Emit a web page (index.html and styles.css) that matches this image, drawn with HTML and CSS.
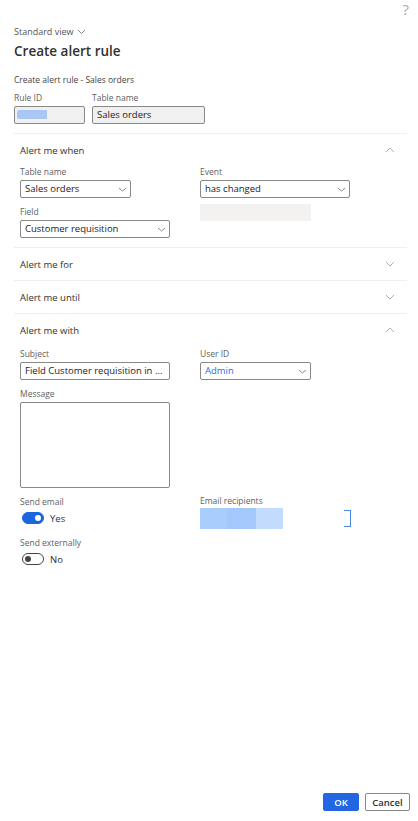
FILE: index.html
```html
<!DOCTYPE html>
<html lang="en">
<head>
    <meta charset="UTF-8">
    <meta name="viewport" content="width=device-width, initial-scale=1.0">
    <title>Create alert rule</title>
    <link rel="stylesheet" href="styles.css">
</head>
<body>
    <div class="dialog">
        <div class="help-bar"><span class="help">?</span></div>

        <div class="view-switch">Standard view
            <svg class="chev-sm" width="9" height="6" viewBox="0 0 9 6"><polyline points="1,1 4.5,4.5 8,1" /></svg>
        </div>
        <h1 class="title">Create alert rule</h1>
        <div class="caption">Create alert rule - Sales orders</div>

        <div class="head-fields">
            <div class="field">
                <label>Rule ID</label>
                <div class="input readonly w-rule"><span class="masked"></span></div>
            </div>
            <div class="field">
                <label>Table name</label>
                <div class="input readonly w-table">Sales orders</div>
            </div>
        </div>

        <!-- Alert me when -->
        <section class="fasttab">
            <div class="fasttab-header">
                <span>Alert me when</span>
                <svg class="chev" width="10" height="6" viewBox="0 0 10 6"><polyline points="1,5 5,1 9,5" /></svg>
            </div>
            <div class="fasttab-body grid-2">
                <div class="col">
                    <div class="field">
                        <label>Table name</label>
                        <div class="input select w-111">Sales orders
                            <svg class="chev-sel" width="9" height="5" viewBox="0 0 9 5"><polyline points="1,1 4.5,4 8,1" /></svg>
                        </div>
                    </div>
                    <div class="field">
                        <label>Field</label>
                        <div class="input select w-150">Customer requisition
                            <svg class="chev-sel" width="9" height="5" viewBox="0 0 9 5"><polyline points="1,1 4.5,4 8,1" /></svg>
                        </div>
                    </div>
                </div>
                <div class="col">
                    <div class="field">
                        <label>Event</label>
                        <div class="input select w-150">has changed
                            <svg class="chev-sel" width="9" height="5" viewBox="0 0 9 5"><polyline points="1,1 4.5,4 8,1" /></svg>
                        </div>
                    </div>
                    <div class="blank-box"></div>
                </div>
            </div>
        </section>

        <section class="fasttab">
            <div class="fasttab-header">
                <span>Alert me for</span>
                <svg class="chev" width="10" height="6" viewBox="0 0 10 6"><polyline points="1,1 5,5 9,1" /></svg>
            </div>
        </section>

        <section class="fasttab">
            <div class="fasttab-header">
                <span>Alert me until</span>
                <svg class="chev" width="10" height="6" viewBox="0 0 10 6"><polyline points="1,1 5,5 9,1" /></svg>
            </div>
        </section>

        <!-- Alert me with -->
        <section class="fasttab">
            <div class="fasttab-header">
                <span>Alert me with</span>
                <svg class="chev" width="10" height="6" viewBox="0 0 10 6"><polyline points="1,5 5,1 9,5" /></svg>
            </div>
            <div class="fasttab-body body-with grid-2">
                <div class="col">
                    <div class="field">
                        <label>Subject</label>
                        <div class="input w-150">Field Customer requisition in ...</div>
                    </div>
                    <div class="field">
                        <label>Message</label>
                        <div class="input textarea w-150"></div>
                    </div>
                    <div class="field">
                        <label>Send email</label>
                        <div class="toggle-row">
                            <span class="toggle on"></span><span>Yes</span>
                        </div>
                    </div>
                    <div class="field after-toggle">
                        <label>Send externally</label>
                        <div class="toggle-row">
                            <span class="toggle"></span><span>No</span>
                        </div>
                    </div>
                </div>
                <div class="col">
                    <div class="field">
                        <label>User ID</label>
                        <div class="input select w-111 link">Admin
                            <svg class="chev-sel" width="9" height="5" viewBox="0 0 9 5"><polyline points="1,1 4.5,4 8,1" /></svg>
                        </div>
                    </div>
                    <div class="field recipients">
                        <label>Email recipients</label>
                        <div class="recipient-row">
                            <span class="masked-wide"><i></i><i></i><i></i></span>
                            <span class="bracket"></span>
                        </div>
                    </div>
                </div>
            </div>
        </section>

        <div class="footer">
            <button class="btn primary">OK</button>
            <button class="btn">Cancel</button>
        </div>
    </div>
</body>
</html>
```

FILE: styles.css
```css
body {
    margin: 0;
    font-family: "Open Sans", "Noto Sans", sans-serif;
    color: #323130;
    background: #fff;
}

.dialog {
    display: flex;
    flex-direction: column;
    min-height: 821px;
    box-sizing: border-box;
    padding: 0 8px 10px 14px;
}

.help-bar {
    display: flex;
    justify-content: flex-end;
    height: 22px;
}

.help {
    font-size: 15px;
    line-height: 19px;
    color: #ababab;
    padding-right: 1px;
}

.view-switch {
    margin-top: 4px;
    font-size: 9px;
    line-height: 12px;
    color: #555;
    display: flex;
    align-items: center;
    gap: 3px;
}

.chev-sm polyline,
.chev polyline,
.chev-sel polyline {
    fill: none;
    stroke: #8a8886;
    stroke-width: 1;
}

.chev polyline {
    stroke: #b3b0ad;
}

.title {
    margin: 4px 0 0;
    font-size: 13.5px;
    line-height: 18px;
    font-weight: 600;
    color: #323130;
}

.caption {
    margin-top: 14px;
    font-size: 8.5px;
    line-height: 12px;
    color: #444;
}

.head-fields {
    display: flex;
    gap: 7px;
    margin-top: 6px;
    padding-bottom: 9px;
}

.field label {
    display: block;
    font-size: 8.5px;
    line-height: 12px;
    color: #616161;
    margin-bottom: 2px;
}

.input {
    position: relative;
    box-sizing: border-box;
    height: 18px;
    border: 1px solid #8a8886;
    border-radius: 2px;
    padding: 0 4px;
    font-size: 9.5px;
    line-height: 16px;
    color: #222;
    white-space: nowrap;
    overflow: hidden;
}

.input.readonly {
    background: #f0f0f0;
}

.w-rule { width: 71px; }
.w-table { width: 113px; }
.w-111 { width: 111px; }
.w-150 { width: 150px; }

.masked {
    display: inline-block;
    width: 30px;
    height: 9px;
    margin: 3px 0 0 -2px;
    background: #a9c7f5;
    border-radius: 2px 0 0 2px;
    vertical-align: top;
}

.select {
    padding-right: 16px;
}

.chev-sel {
    position: absolute;
    right: 3px;
    top: 6px;
}

.link {
    color: #2b6de0;
}

.fasttab {
    border-top: 1px solid #efefef;
    margin-right: 3px;
}

.fasttab-header {
    display: flex;
    align-items: center;
    justify-content: space-between;
    height: 32px;
    padding: 0 12px 0 6px;
    font-size: 9.5px;
    font-weight: 500;
    color: #323130;
}

.fasttab-body {
    padding: 0 0 9px 6px;
}

.body-with {
    padding-top: 2px;
}

.grid-2 {
    display: grid;
    grid-template-columns: 180px 1fr;
}

.col {
    display: flex;
    flex-direction: column;
    gap: 8px;
}

.blank-box {
    width: 111px;
    height: 17px;
    margin-top: -2px;
    background: #f3f2f1;
}

.textarea {
    height: 86px;
}

.toggle-row {
    display: flex;
    align-items: center;
    gap: 6px;
    height: 14px;
    margin: 3px 0 0 2px;
    font-size: 9.5px;
    color: #323130;
}

.after-toggle {
    margin-top: 4px;
}

.toggle {
    position: relative;
    box-sizing: border-box;
    width: 22px;
    height: 12px;
    border: 1px solid #444;
    border-radius: 6px;
    background: #fff;
}

.toggle::after {
    content: "";
    position: absolute;
    top: 2px;
    left: 2px;
    width: 6px;
    height: 6px;
    border-radius: 50%;
    background: #444;
}

.toggle.on {
    background: #1a66e0;
    border-color: #1a66e0;
}

.toggle.on::after {
    left: auto;
    right: 2px;
    background: #fff;
}

.recipients {
    margin-top: 107px;
}

.recipients label {
    margin-bottom: 1px;
}

.recipient-row {
    display: flex;
    align-items: center;
}

.masked-wide {
    display: flex;
    height: 21px;
}

.masked-wide i {
    display: block;
    width: 27px;
    background: #a9cdfd;
}

.masked-wide i:nth-child(2) {
    width: 29px;
    background: #a3c8fb;
}

.masked-wide i:nth-child(3) {
    background: #c3dcfe;
}

.bracket {
    box-sizing: border-box;
    width: 7px;
    height: 17px;
    margin-left: 61px;
    border: 1.5px solid #4a86ea;
    border-left: none;
}

.footer {
    margin-top: auto;
    display: flex;
    justify-content: flex-end;
    gap: 6px;
}

.btn {
    box-sizing: border-box;
    height: 18px;
    padding: 0 6px;
    border: 1px solid #8a8886;
    border-radius: 2px;
    background: #fff;
    font-family: inherit;
    font-size: 9.5px;
    font-weight: 600;
    color: #323130;
    min-width: 45px;
}

.btn.primary {
    min-width: 36px;
    background: #2266e3;
    border-color: #2266e3;
    color: #fff;
}
```
